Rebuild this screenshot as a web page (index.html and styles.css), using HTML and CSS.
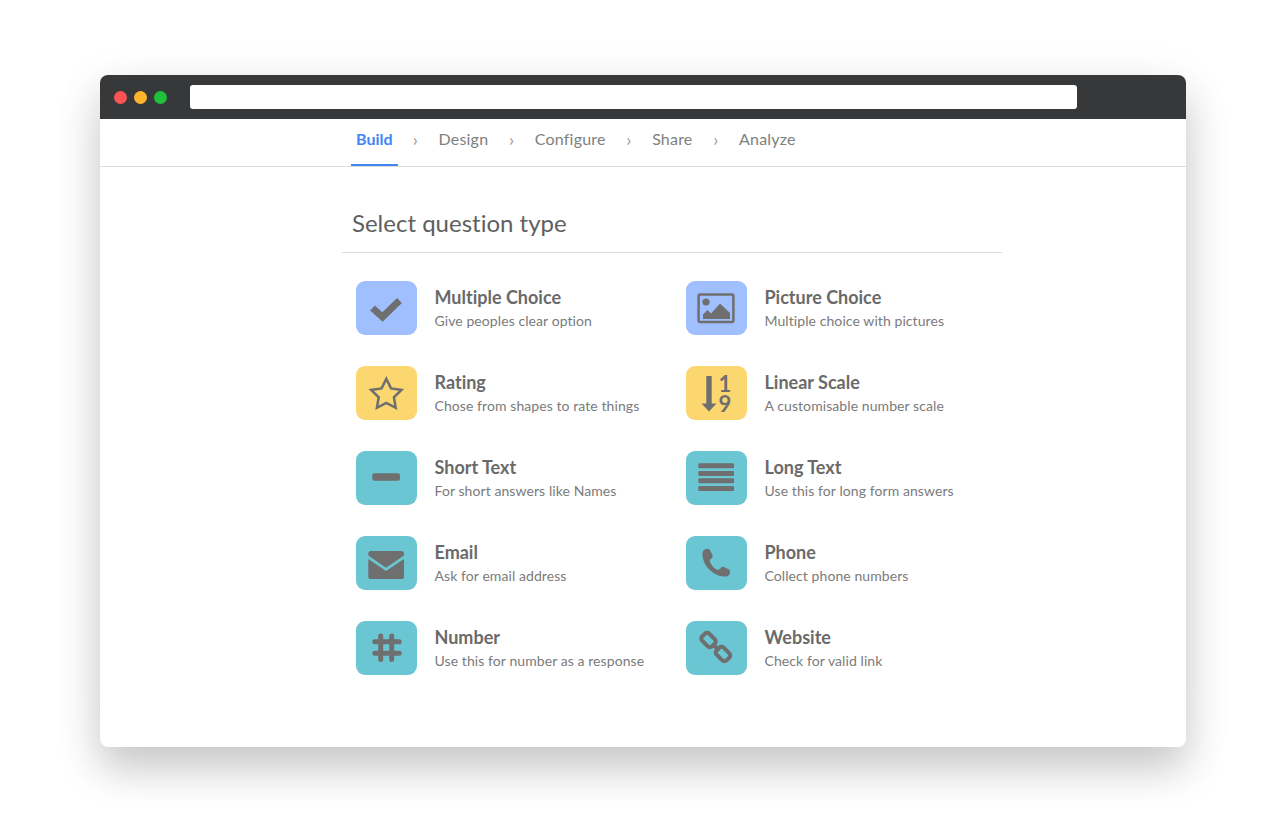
FILE: index.html
```html
<!DOCTYPE html>
<html lang="en">
<head>
<meta charset="utf-8">
<title>Select question type</title>
<link rel="stylesheet" href="styles.css">
</head>
<body>
<div class="window">
  <header class="titlebar">
    <div class="lights"><span class="light red"></span><span class="light amber"></span><span class="light green"></span></div>
    <div class="address"></div>
  </header>
  <nav class="steps">
    <a class="step active">Build</a><span class="sep">›</span>
    <a class="step">Design</a><span class="sep">›</span>
    <a class="step">Configure</a><span class="sep">›</span>
    <a class="step">Share</a><span class="sep">›</span>
    <a class="step">Analyze</a>
  </nav>
  <main class="panel">
    <h1 class="heading">Select question type</h1>
    <div class="types">
      <div class="type">
        <div class="badge blue"><svg viewBox="0 0 61 54"><polyline class="check" points="16.5,27 26.5,36 43.5,19.5"/></svg></div>
        <div class="copy"><div class="name">Multiple Choice</div><div class="desc">Give peoples clear option</div></div>
      </div>
      <div class="type">
        <div class="badge blue"><svg viewBox="0 0 61 54"><rect class="outline" x="12.6" y="13.6" width="34.8" height="27.4" rx="1.5"/><circle class="fill" cx="20" cy="21" r="3.6"/><path class="fill" d="M17 38v-4.500l4.500-4.500 3.500 3.500 9-10 10 9.500V38z"/></svg></div>
        <div class="copy"><div class="name">Picture Choice</div><div class="desc">Multiple choice with pictures</div></div>
      </div>
      <div class="type">
        <div class="badge yellow"><svg viewBox="0 0 61 54"><path class="outline" d="M30.300 12.800l4.700 9.600 10.500 1.500-7.600 7.400 1.800 10.500-9.400-5-9.400 5 1.800-10.500-7.600-7.400 10.500-1.500z"/></svg></div>
        <div class="copy"><div class="name">Rating</div><div class="desc">Chose from shapes to rate things</div></div>
      </div>
      <div class="type">
        <div class="badge yellow"><svg viewBox="0 0 61 54"><path class="fill" d="M20.300 10h5.400v27.500H30.500l-7.500 8-7.500-8h4.800z"/><text class="digit"><tspan x="39" y="26">1</tspan><tspan x="39" y="46">9</tspan></text></svg></div>
        <div class="copy"><div class="name">Linear Scale</div><div class="desc">A customisable number scale</div></div>
      </div>
      <div class="type">
        <div class="badge teal"><svg viewBox="0 0 61 54"><rect class="fill" x="16.300" y="22.300" width="27.700" height="7.400" rx="2"/></svg></div>
        <div class="copy"><div class="name">Short Text</div><div class="desc">For short answers like Names</div></div>
      </div>
      <div class="type">
        <div class="badge teal"><svg viewBox="0 0 61 54"><g class="fill"><rect x="12.300" y="12.300" width="35.700" height="5" rx="1"/><rect x="12.300" y="20" width="35.700" height="5" rx="1"/><rect x="12.300" y="27.300" width="35.700" height="5" rx="1"/><rect x="12.300" y="35" width="35.700" height="5" rx="1"/></g></svg></div>
        <div class="copy"><div class="name">Long Text</div><div class="desc">Use this for long form answers</div></div>
      </div>
      <div class="type">
        <div class="badge teal"><svg viewBox="0 0 61 54"><path class="fill" d="M15.500 15h29.500a3 3 0 0 1 3 3v1.500L30 31.800 12.300 19.500V18a3 3 0 0 1 3.200-3z"/><path class="fill" d="M12.300 23l17.700 12 18-12v18a2 2 0 0 1-2 2H14.300a2 2 0 0 1-2-2z"/></svg></div>
        <div class="copy"><div class="name">Email</div><div class="desc">Ask for email address</div></div>
      </div>
      <div class="type">
        <div class="badge teal"><svg viewBox="0 0 61 54"><path class="fill" d="M20 13c-3 1-4 4-3.500 7C18 31 27 39 37 40.500c4 .5 6-.5 7-3.500.5-2 0-3-2-4l-4-2c-1.500-.5-2.500 0-3.500 1.500-1.500 1.500-3.500 1.500-5 .5-2.500-2-4.500-4.500-5.500-7-.5-1.500 0-2.500 1.500-3.500 1-1 1.500-2 1-3.500l-2-4c-1-2-2.500-2.500-4.500-2z"/></svg></div>
        <div class="copy"><div class="name">Phone</div><div class="desc">Collect phone numbers</div></div>
      </div>
      <div class="type">
        <div class="badge teal"><svg viewBox="0 0 61 54"><path class="hash" d="M24.700 15v23.500M35.700 15v23.500M18.800 20.700h24.400M18.800 32.300h24.400"/></svg></div>
        <div class="copy"><div class="name">Number</div><div class="desc">Use this for number as a response</div></div>
      </div>
      <div class="type">
        <div class="badge teal"><svg viewBox="0 0 61 54"><g class="links"><rect x="15.500" y="14" width="14" height="10" rx="3" transform="rotate(45 22.500 19)"/><rect x="30" y="28" width="14" height="10" rx="3" transform="rotate(45 37 33)"/><path d="M26.500 23l6.500 6"/></g></svg></div>
        <div class="copy"><div class="name">Website</div><div class="desc">Check for valid link</div></div>
      </div>
    </div>
  </main>
</div>
</body>
</html>
```
FILE: styles.css
```css
* { box-sizing: border-box; }
html, body { margin: 0; height: 100%; background: #fff; overflow: hidden; }
body { padding: 75px 100px 0; font-family: "Lato", "Noto Sans", sans-serif; font-variant-ligatures: none; }
.window {
  width: 1086px;
  height: 672px;
  background: #fff;
  border-radius: 8px;
  box-shadow: 0 22px 40px rgba(0, 0, 0, .19), 0 10px 60px rgba(0, 0, 0, .06);
}
.titlebar {
  height: 44px;
  background: #37383a;
  border-radius: 8px 8px 0 0;
  display: flex;
  align-items: center;
  padding: 0 109px 0 14px;
}
.lights { display: flex; gap: 7px; width: 76px; }
.light { width: 13px; height: 13px; border-radius: 50%; }
.red { background: #fc5454; }
.amber { background: #fdb52e; }
.green { background: #1fc13a; }
.address { flex: 1; height: 24px; background: #fff; border-radius: 3px; }
.steps {
  height: 48px;
  border-bottom: 1px solid #dcdcdc;
  padding-left: 251px;
  display: flex;
  align-items: stretch;
}
.step {
  padding: 0 6px;
  font-size: 16px;
  line-height: 40px;
  letter-spacing: .2px;
  color: #808080;
  height: 47px;
}
.step.active {
  padding: 0 5.500px 0 5px;
  letter-spacing: 0;
  color: #4285f4;
  font-weight: 700;
  border-bottom: 2px solid #4285f4;
}
.sep { width: 34.500px; text-align: center; color: #999; font-size: 18px; line-height: 40px; }
.panel { width: 660px; margin-left: 242px; }
.heading {
  margin: 0;
  height: 86px;
  padding: 38px 0 0 10px;
  font-size: 24px;
  line-height: 36px;
  font-weight: 400;
  color: #5f5f5f;
  border-bottom: 1px solid #dcdcdc;
}
.types {
  display: grid;
  grid-template-columns: 330px 316px;
  grid-auto-rows: 54px;
  row-gap: 31px;
  padding: 28px 0 0 14px;
}
.type { display: flex; gap: 17.500px; align-items: flex-start; }
.badge { width: 61px; height: 54px; border-radius: 9px; flex: none; }
.badge svg { display: block; width: 61px; height: 54px; }
.blue { background: #a0bfff; }
.yellow { background: #fcd76f; }
.teal { background: #6bc6d3; }
.name { font-size: 18px; line-height: 24px; margin-top: 4px; font-weight: 700; color: #6a6a6a; }
.desc { font-size: 14px; line-height: 20px; margin-top: 2px; letter-spacing: .08px; color: #7b7b7b; }
.fill { fill: #6f6f6f; }
.outline { fill: none; stroke: #6f6f6f; stroke-width: 2.500; }
.check { fill: none; stroke: #6f6f6f; stroke-width: 7; }
.hash { fill: none; stroke: #6f6f6f; stroke-width: 5; stroke-linecap: round; }
.links { fill: none; stroke: #6f6f6f; stroke-width: 4; }
.digit { font-family: "Lato", sans-serif; font-weight: 700; font-size: 22px; fill: #6f6f6f; text-anchor: middle; }
```
